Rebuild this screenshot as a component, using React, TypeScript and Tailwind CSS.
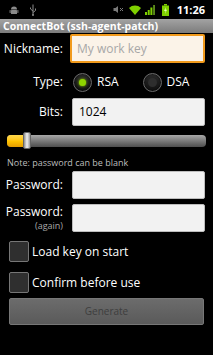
import React from "react";

const font = { fontFamily: '"Open Sans", "Noto Sans", sans-serif' };

function StatusBar() {
  return (
    <div className="h-[19px] bg-black flex items-center px-[8px] relative">
      {/* android robot */}
      <svg width="10" height="10" viewBox="0 0 10 10" className="ml-[1px]">
        <path d="M2 4.5 A3 3 0 0 1 8 4.5 Z" fill="#8a8a8a" />
        <rect x="2" y="5" width="6" height="4" rx="0.6" fill="#8a8a8a" />
        <rect x="0.6" y="5" width="1" height="3" rx="0.5" fill="#8a8a8a" />
        <rect x="8.4" y="5" width="1" height="3" rx="0.5" fill="#8a8a8a" />
      </svg>
      {/* usb */}
      <svg width="8" height="12" viewBox="0 0 8 12" className="ml-[10px]">
        <path d="M4 0.5 V11 M4 7 L1.5 5 V3.5 M4 8.5 L6.5 6.5 V4.5" stroke="#8a8a8a" strokeWidth="1" fill="none" />
        <circle cx="4" cy="11" r="1" fill="#8a8a8a" />
      </svg>
      <div className="flex-1" />
      {/* mute */}
      <svg width="11" height="9" viewBox="0 0 11 9" className="mr-[5px]">
        <path d="M0.5 3 H2.5 L5 1 V8 L2.5 6 H0.5 Z" fill="#7a7a7a" />
        <path d="M7 3 L10 6 M10 3 L7 6" stroke="#7a7a7a" strokeWidth="1" />
      </svg>
      {/* wifi */}
      <svg width="12" height="10" viewBox="0 0 12 10" className="mr-[4px]">
        <path d="M0 3 A8.5 8.5 0 0 1 12 3 L6 10 Z" fill="#7fd000" />
      </svg>
      {/* signal */}
      <svg width="10" height="10" viewBox="0 0 10 10" className="mr-[7px]">
        <rect x="0" y="7" width="2" height="3" fill="#7fd000" />
        <rect x="2.7" y="5" width="2" height="5" fill="#7fd000" />
        <rect x="5.4" y="2.5" width="2" height="7.5" fill="#7fd000" />
        <rect x="8.1" y="0" width="1.9" height="10" fill="#5a8a1a" />
      </svg>
      {/* battery */}
      <svg width="7" height="12" viewBox="0 0 7 12" className="mr-[8px]">
        <rect x="2" y="0" width="3" height="1.5" fill="#7fd000" />
        <rect x="0" y="1.5" width="7" height="10.5" fill="#7fd000" />
        <path d="M4 3 L2 7 H3.6 L3 10 L5 5.8 H3.5 Z" fill="#e8ffb0" />
      </svg>
      <span className="text-white font-bold text-[11px] leading-none" style={font}>11:26</span>
    </div>
  );
}

function Field({ label, placeholder, value, focused }: { label: React.ReactNode; placeholder?: string; value?: string; focused?: boolean }) {
  return (
    <div className="flex items-center">
      <div className="w-[65px] text-right text-white text-[12px] leading-[16px] pr-[2px]">{label}</div>
      <div
        className={
          focused
            ? "ml-[5px] w-[135px] h-[29px] bg-[#fbf3e8] border-2 border-[#f19a1c] rounded-[2px] flex items-center px-[5px]"
            : "ml-[7px] w-[133px] h-[28px] bg-[#f2f2f2] border border-[#bdbdbd] rounded-[2px] flex items-center px-[6px]"
        }
      >
        {value ? (
          <span className="text-black text-[12px]">{value}</span>
        ) : (
          <span className="text-[#a7a7a7] text-[12px]">{placeholder}</span>
        )}
      </div>
    </div>
  );
}

function Radio({ checked, label }: { checked?: boolean; label: string }) {
  return (
    <div className="flex items-center">
      <div className="w-[19px] h-[19px] rounded-full bg-gradient-to-b from-[#2a2a2a] to-[#111] border border-[#6a6a6a] flex items-center justify-center shadow-[inset_0_0_2px_#000]">
        {checked ? (
          <div className="w-[7px] h-[7px] rounded-full bg-[#8fd400] shadow-[0_0_3px_#9fe000]" />
        ) : (
          <div className="w-[9px] h-[9px] rounded-full bg-[#2e2e2e]" />
        )}
      </div>
      <span className="ml-[5px] text-white text-[12px]">{label}</span>
    </div>
  );
}

function Check({ label }: { label: string }) {
  return (
    <div className="flex items-center pl-[9px]">
      <div className="w-[20px] h-[21px] bg-[#2f2f2f] border border-[#767676] rounded-[2px]" />
      <span className="ml-[3px] text-white text-[12px]">{label}</span>
    </div>
  );
}

export default function App() {
  return (
    <div className="w-[213px] h-[355px] bg-black overflow-hidden" style={font}>
      <StatusBar />
      <div className="h-[14px] bg-gradient-to-b from-[#a3a3a3] to-[#7c7c7c] flex items-center px-[3px]">
        <span className="text-white font-bold text-[10.5px] leading-none">ConnectBot (ssh-agent-patch)</span>
      </div>

      <div className="mt-[1px]">
        <Field label="Nickname:" placeholder="My work key" focused />
      </div>

      <div className="flex items-center mt-[8px] h-[22px]">
        <div className="w-[65px] text-right text-white text-[12px] pr-[2px]">Type:</div>
        <div className="ml-[8px]">
          <Radio checked label="RSA" />
        </div>
        <div className="ml-[24px]">
          <Radio label="DSA" />
        </div>
      </div>

      <div className="mt-[5px]">
        <Field label="Bits:" value="1024" />
      </div>

      <div className="mt-[6px] mx-[7px] h-[17px] flex items-center relative">
        <div className="w-full h-[12px] rounded-[4px] bg-gradient-to-b from-[#a8a8a8] via-[#7a7a7a] to-[#4e4e4e] overflow-hidden">
          <div className="w-[19px] h-full bg-gradient-to-b from-[#ffd84a] via-[#ffc400] to-[#e49c00]" />
        </div>
        <div className="absolute left-[16px] top-0 w-[8px] h-[17px] rounded-[2px] bg-gradient-to-r from-[#8e8e8e] via-[#f2f2f2] to-[#9a9a9a] border border-[#666]" />
      </div>

      <div className="mt-[8px] px-[7px] text-[#bdbdbd] text-[9px] leading-[11px]">Note: password can be blank</div>

      <div className="mt-[3px]">
        <Field label="Password:" />
      </div>
      <div className="mt-[5px]">
        <Field
          label={
            <div className="flex flex-col items-end">
              <span className="leading-[16px]">Password:</span>
              <span className="text-[#a9a9a9] text-[9px] leading-[12px]">(again)</span>
            </div>
          }
        />
      </div>

      <div className="mt-[9px]">
        <Check label="Load key on start" />
      </div>
      <div className="mt-[10px]">
        <Check label="Confirm before use" />
      </div>

      <div className="mt-[5px] mx-[9px] h-[27px] bg-gradient-to-b from-[#6c6c6c] to-[#5a5a5a] border border-[#777] rounded-[2px] flex items-center justify-center">
        <span className="text-[#3e3e3e] text-[10px]">Generate</span>
      </div>
    </div>
  );
}
